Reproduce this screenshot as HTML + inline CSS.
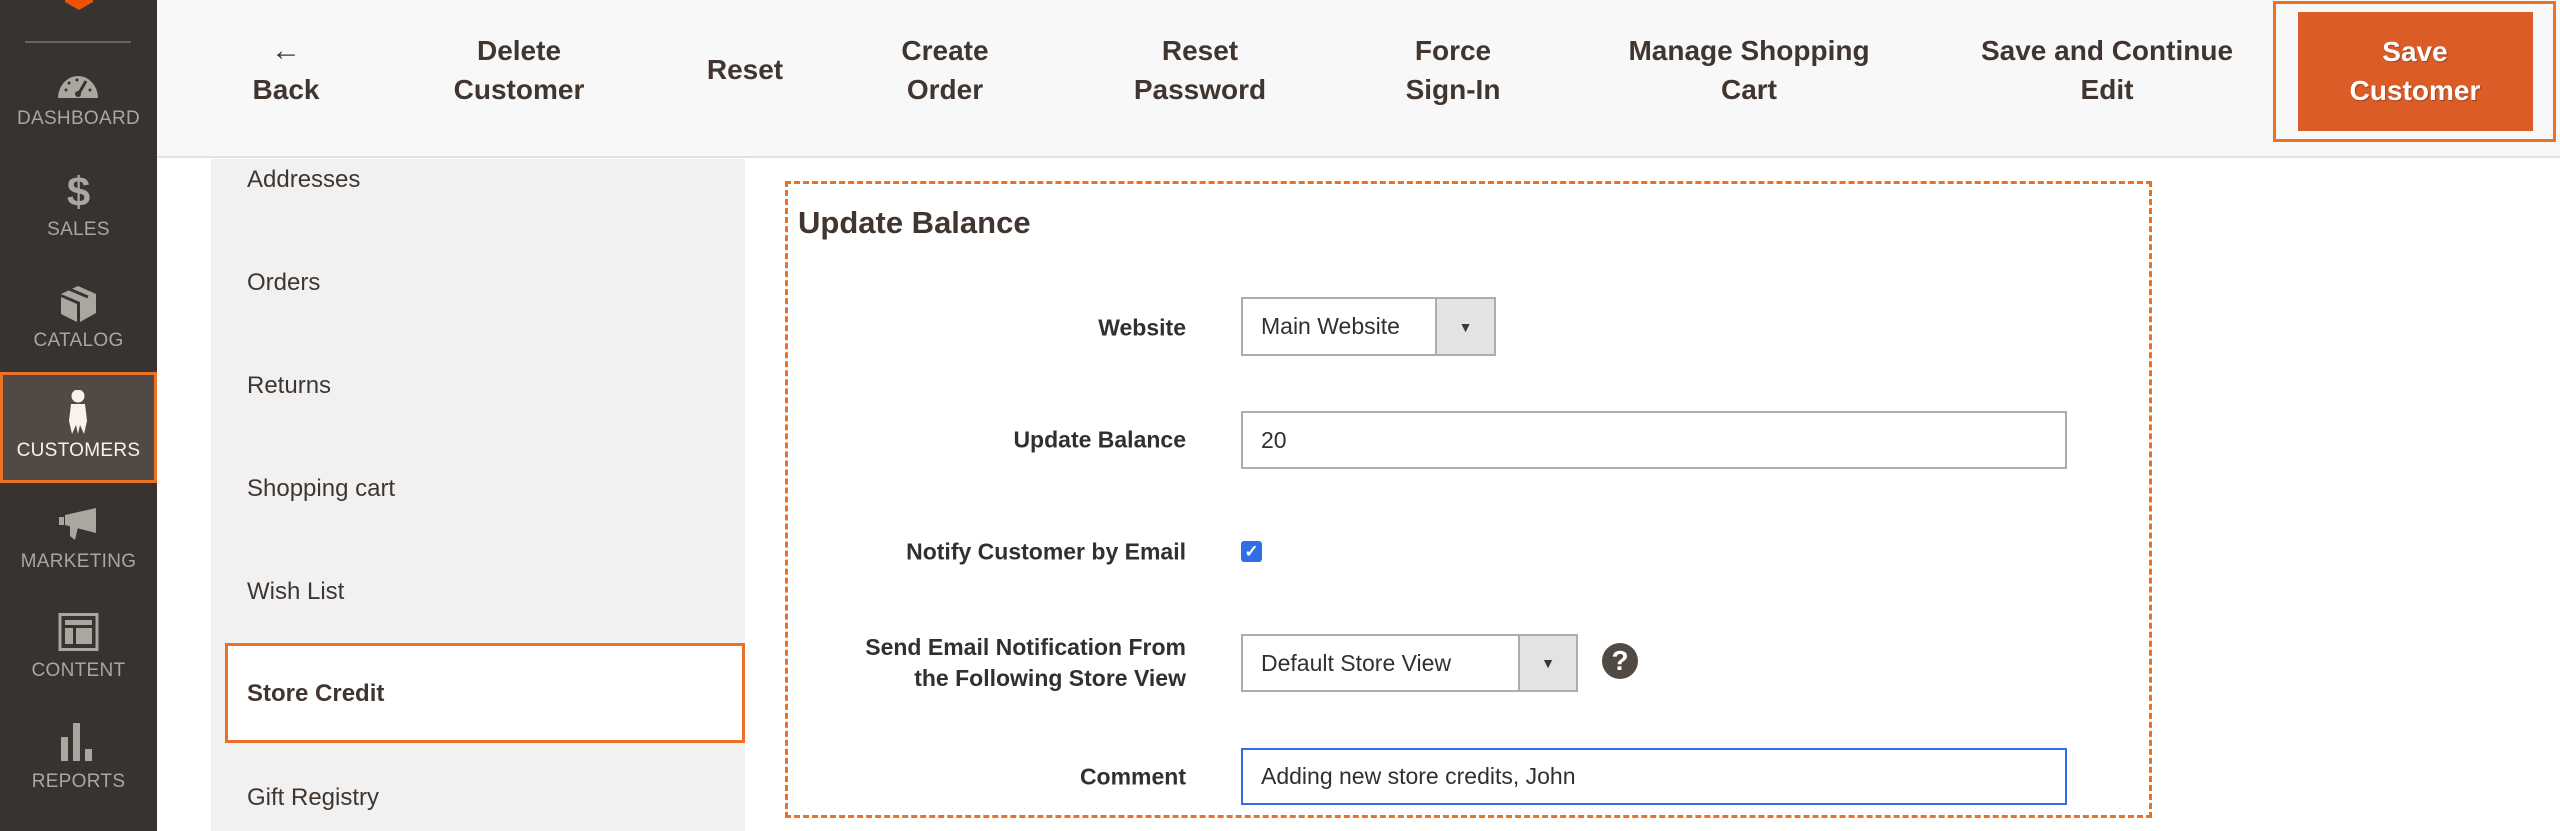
<!DOCTYPE html>
<html><head><meta charset="utf-8"><style>
*{margin:0;padding:0;box-sizing:border-box}
body{width:2560px;height:831px;overflow:hidden;background:#fff;font-family:"Liberation Sans",sans-serif;color:#41362f;position:relative}
.abs{position:absolute}
#side{left:0;top:0;width:157px;height:831px;background:#373330}
.mi{position:absolute;left:0;width:157px;text-align:center;color:#aaa6a0;font-size:19px;letter-spacing:0.3px}
.ic{position:absolute;left:0;width:157px}
#hdr{left:157px;top:0;width:2403px;height:158px;background:#f8f8f8;border-bottom:2px solid #e3e3e3}
.hb{position:absolute;text-align:center;font-weight:bold;font-size:28px;line-height:39px;color:#41362f;transform:translateX(-50%);white-space:nowrap}
#tabs{left:211px;top:159px;width:534px;height:672px;background:#f1f1f1}
.tab{position:absolute;left:247px;font-size:24px;color:#41362f;transform:translateY(-50%)}
.lbl{position:absolute;right:1374px;text-align:right;font-weight:bold;font-size:23px;line-height:31px;transform:translateY(-50%);color:#303030}
.inp{position:absolute;border:2px solid #adadad;background:#fff;font-size:23px;padding-left:18px;display:flex;align-items:center;color:#303030}
.arr{position:absolute;top:0;bottom:0;right:0;background:#e3e3e3;border-left:2px solid #adadad;display:flex;align-items:center;justify-content:center;font-size:14px;color:#41362f}
</style></head><body>
<div id="side" class="abs">
  <svg class="abs" style="left:64px;top:-10px" width="30" height="20"><polygon points="15,20 29,12 29,0 1,0 1,12" fill="#eb5202"/></svg>
  <div class="abs" style="left:25px;top:41px;width:106px;height:2px;background:#6a645f"></div>
  <svg class="ic" style="top:70px" height="28" viewBox="0 0 157 28"><path d="M58 28 A20 22 0 0 1 98 28 Z" fill="#aaa6a0"/><line x1="78" y1="25" x2="86" y2="11" stroke="#373330" stroke-width="3"/><circle cx="78" cy="24" r="3" fill="#373330"/><g fill="#373330"><circle cx="66" cy="20" r="1.5"/><circle cx="69" cy="13" r="1.5"/><circle cx="77" cy="10" r="1.5"/><circle cx="90" cy="20" r="1.5"/></g></svg>
  <div class="mi" style="top:108px">DASHBOARD</div>
  <div class="ic" style="top:171px;text-align:center;font-size:42px;font-weight:bold;color:#aaa6a0;line-height:42px">$</div>
  <div class="mi" style="top:219px">SALES</div>
  <svg class="ic" style="top:284px" height="38" viewBox="0 0 157 38"><polygon points="78,2 96,10 96,29 80,38 80,18 61,10" fill="#aaa6a0"/><polygon points="61,13 77,20 77,38 61,30" fill="#aaa6a0"/><line x1="69" y1="5" x2="88" y2="13" stroke="#373330" stroke-width="3"/></svg>
  <div class="mi" style="top:330px">CATALOG</div>
  <div class="abs" style="left:0;top:372px;width:157px;height:111px;background:#514943;border:3px solid #eb7126"></div>
  <svg class="ic" style="top:390px" height="44" viewBox="0 0 157 44"><circle cx="78" cy="6" r="6.5" fill="#f7f3eb"/><path d="M71 14 H85 L87 31 L84 44 L80 35 L78 44 L76 35 L72 44 L69 31 Z" fill="#f7f3eb"/></svg>
  <div class="mi" style="top:440px;color:#f7f3eb">CUSTOMERS</div>
  <svg class="ic" style="top:508px" height="32" viewBox="0 0 157 32"><rect x="59" y="9" width="5" height="8" fill="#aaa6a0"/><polygon points="65,7 96,0 96,25 65,17" fill="#aaa6a0"/><polygon points="70,17 78,19 75,32 70,28" fill="#aaa6a0"/></svg>
  <div class="mi" style="top:551px">MARKETING</div>
  <svg class="ic" style="top:613px" height="38" viewBox="0 0 157 38"><rect x="60" y="1.5" width="37" height="35" fill="none" stroke="#aaa6a0" stroke-width="3"/><rect x="65" y="7" width="27" height="5" fill="#aaa6a0"/><rect x="65" y="15" width="8" height="16" fill="#aaa6a0"/><rect x="76" y="15" width="16" height="16" fill="#aaa6a0"/></svg>
  <div class="mi" style="top:660px">CONTENT</div>
  <svg class="ic" style="top:723px" height="38" viewBox="0 0 157 38"><rect x="61" y="14" width="7" height="24" fill="#aaa6a0"/><rect x="73" y="0" width="7" height="38" fill="#aaa6a0"/><rect x="85" y="26" width="7" height="12" fill="#aaa6a0"/></svg>
  <div class="mi" style="top:771px">REPORTS</div>
</div>
<div id="hdr" class="abs">
  <div class="hb" style="left:129px;top:31px;font-size:30px">&#8592;</div>
  <div class="hb" style="left:129px;top:70px">Back</div>
  <div class="hb" style="left:362px;top:31px">Delete<br>Customer</div>
  <div class="hb" style="left:588px;top:50px">Reset</div>
  <div class="hb" style="left:788px;top:31px">Create<br>Order</div>
  <div class="hb" style="left:1043px;top:31px">Reset<br>Password</div>
  <div class="hb" style="left:1296px;top:31px">Force<br>Sign-In</div>
  <div class="hb" style="left:1592px;top:31px">Manage Shopping<br>Cart</div>
  <div class="hb" style="left:1950px;top:31px">Save and Continue<br>Edit</div>
  <div class="abs" style="left:2116px;top:1px;width:283px;height:141px;border:3px solid #eb7126"></div>
  <div class="abs" style="left:2141px;top:12px;width:235px;height:119px;background:#dc5c27"></div>
  <div class="hb" style="left:2258px;top:32px;color:#fff;text-shadow:1px 1px 1px rgba(0,0,0,.3)">Save<br>Customer</div>
</div>
<div id="tabs" class="abs"></div>
<div class="tab" style="top:180px">Addresses</div>
<div class="tab" style="top:283px">Orders</div>
<div class="tab" style="top:386px">Returns</div>
<div class="tab" style="top:489px">Shopping cart</div>
<div class="tab" style="top:592px">Wish List</div>
<div class="abs" style="left:225px;top:643px;width:520px;height:100px;background:#fff;border:3px solid #eb7126"></div>
<div class="tab" style="top:694px;font-weight:bold">Store Credit</div>
<div class="tab" style="top:798px">Gift Registry</div>
<div class="abs" style="left:785px;top:181px;width:1367px;height:637px;border:3px dashed #eb7126"></div>
<div class="abs" style="left:798px;top:205px;font-size:31px;font-weight:bold;color:#41362f">Update Balance</div>
<div class="lbl" style="top:328px">Website</div>
<div class="inp" style="left:1241px;top:297px;width:255px;height:59px">Main Website<div class="arr" style="width:59px">&#9660;</div></div>
<div class="lbl" style="top:440px">Update Balance</div>
<div class="inp" style="left:1241px;top:411px;width:826px;height:58px">20</div>
<div class="lbl" style="top:552px">Notify Customer by Email</div>
<div class="abs" style="left:1241px;top:541px;width:21px;height:21px;background:#2f6fe5;border-radius:3px;color:#fff;font-size:17px;line-height:21px;text-align:center;font-weight:bold">&#10003;</div>
<div class="lbl" style="top:663px">Send Email Notification From<br>the Following Store View</div>
<div class="inp" style="left:1241px;top:634px;width:337px;height:58px">Default Store View<div class="arr" style="width:58px">&#9660;</div></div>
<div class="abs" style="left:1602px;top:643px;width:36px;height:36px;border-radius:50%;background:#514943;color:#fff;font-weight:bold;font-size:28px;line-height:36px;text-align:center">?</div>
<div class="lbl" style="top:777px">Comment</div>
<div class="inp" style="left:1241px;top:748px;width:826px;height:57px;border-color:#2f6fe5">Adding new store credits, John</div>
</body></html>
